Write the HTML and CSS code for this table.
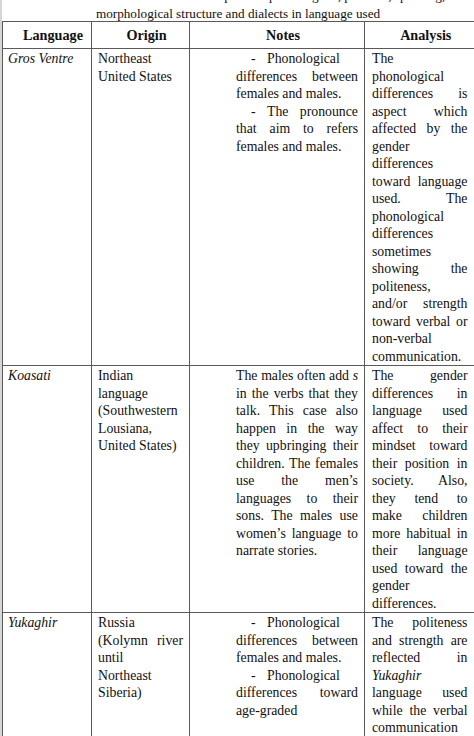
FILE: index.html
```html
<!DOCTYPE html>
<html>
<head>
<meta charset="utf-8">
<link rel="stylesheet" href="styles.css">
</head>
<body>
<div class="page">
  <div class="caption">
    <div class="cap-line cap-first">Table 1. Gender differences in the aspects of phonological, pronoun, speaking,</div>
    <div class="cap-line cap-second">morphological structure and dialects in language used</div>
  </div>
  <table class="grid">
    <colgroup>
      <col class="c-lang">
      <col class="c-origin">
      <col class="c-notes">
      <col class="c-analysis">
    </colgroup>
    <thead>
      <tr>
        <th>Language</th>
        <th>Origin</th>
        <th>Notes</th>
        <th class="last">Analysis</th>
      </tr>
    </thead>
    <tbody>
      <tr>
        <td class="lang"><i>Gros Ventre</i></td>
        <td class="origin">
          <span class="ln">Northeast</span>
          <span class="ln end">United States</span>
        </td>
        <td class="notes">
          <p class="item">
            <span class="ln"><span class="dash">-</span>Phonological</span>
            <span class="ln">differences between</span>
            <span class="ln end">females and males.</span>
          </p>
          <p class="item">
            <span class="ln"><span class="dash">-</span>The pronounce</span>
            <span class="ln">that aim to refers</span>
            <span class="ln end">females and males.</span>
          </p>
        </td>
        <td class="analysis last">
          <span class="ln">The</span>
          <span class="ln">phonological</span>
          <span class="ln">differences is</span>
          <span class="ln">aspect which</span>
          <span class="ln">affected by the</span>
          <span class="ln">gender</span>
          <span class="ln">differences</span>
          <span class="ln">toward language</span>
          <span class="ln">used. The</span>
          <span class="ln">phonological</span>
          <span class="ln">differences</span>
          <span class="ln">sometimes</span>
          <span class="ln">showing the</span>
          <span class="ln">politeness,</span>
          <span class="ln">and/or strength</span>
          <span class="ln">toward verbal or</span>
          <span class="ln">non-verbal</span>
          <span class="ln end">communication.</span>
        </td>
      </tr>
      <tr>
        <td class="lang"><i>Koasati</i></td>
        <td class="origin">
          <span class="ln">Indian</span>
          <span class="ln">language</span>
          <span class="ln">(Southwestern</span>
          <span class="ln">Lousiana,</span>
          <span class="ln end">United States)</span>
        </td>
        <td class="notes">
          <span class="ln">The males often add <i>s</i></span>
          <span class="ln">in the verbs that they</span>
          <span class="ln">talk. This case also</span>
          <span class="ln">happen in the way</span>
          <span class="ln">they upbringing their</span>
          <span class="ln">children. The females</span>
          <span class="ln">use the men’s</span>
          <span class="ln">languages to their</span>
          <span class="ln">sons. The males use</span>
          <span class="ln">women’s language to</span>
          <span class="ln end">narrate stories.</span>
        </td>
        <td class="analysis last">
          <span class="ln">The gender</span>
          <span class="ln">differences in</span>
          <span class="ln">language used</span>
          <span class="ln">affect to their</span>
          <span class="ln">mindset toward</span>
          <span class="ln">their position in</span>
          <span class="ln">society. Also,</span>
          <span class="ln">they tend to</span>
          <span class="ln">make children</span>
          <span class="ln">more habitual in</span>
          <span class="ln">their language</span>
          <span class="ln">used toward the</span>
          <span class="ln">gender</span>
          <span class="ln end">differences.</span>
        </td>
      </tr>
      <tr class="final">
        <td class="lang"><i>Yukaghir</i></td>
        <td class="origin">
          <span class="ln">Russia</span>
          <span class="ln">(Kolymn river</span>
          <span class="ln">until</span>
          <span class="ln">Northeast</span>
          <span class="ln end">Siberia)</span>
        </td>
        <td class="notes">
          <p class="item">
            <span class="ln"><span class="dash">-</span>Phonological</span>
            <span class="ln">differences between</span>
            <span class="ln end">females and males.</span>
          </p>
          <p class="item">
            <span class="ln"><span class="dash">-</span>Phonological</span>
            <span class="ln">differences toward</span>
            <span class="ln end">age-graded</span>
          </p>
        </td>
        <td class="analysis last">
          <span class="ln">The politeness</span>
          <span class="ln">and strength are</span>
          <span class="ln">reflected in</span>
          <span class="ln"><i>Yukaghir</i></span>
          <span class="ln">language used</span>
          <span class="ln">while the verbal</span>
          <span class="ln end">communication</span>
        </td>
      </tr>
    </tbody>
  </table>
</div>
</body>
</html>
```

FILE: styles.css
```css
html, body {
  margin: 0;
  padding: 0;
  background: #ffffff;
}
body {
  font-family: "Liberation Serif", "Times New Roman", serif;
  color: #111111;
  overflow: hidden;
}
.page {
  width: 472px;
  border-left: 2px solid #d6d6d6;
}
.caption {
  font-size: 13.2px;
  line-height: 15px;
  text-align: center;
  white-space: nowrap;
}
.cap-first {
  margin-top: -12px;
}
.cap-second {
  margin-top: 3px;
}
.grid {
  border-collapse: collapse;
  table-layout: fixed;
  width: 472px;
  font-size: 13.8px;
  line-height: 17.5px;
}
.c-lang { width: 89px; }
.c-origin { width: 98px; }
.c-notes { width: 175px; }
.c-analysis { width: 110px; }
th, td {
  border: 1px solid #5a5a5a;
  vertical-align: top;
}
th {
  font-size: 14.2px;
  font-weight: bold;
  text-align: center;
  padding: 4px 0 4px 12px;
  height: 18px;
  line-height: 18px;
}
td {
  padding: 1px 6px 0 6px;
  text-align: left;
}
th.last, td.last {
  border-right: none;
}
td.lang {
  padding-left: 5px;
}
td.notes {
  padding-left: 46px;
}
td.analysis {
  padding-left: 7px;
  padding-right: 7px;
}
.ln {
  display: block;
  white-space: nowrap;
  text-align: justify;
  text-align-last: justify;
}
.ln.end {
  text-align-last: left;
}
.item {
  margin: 0;
}
.item .ln:first-child {
  padding-left: 15px;
}
.dash {
  display: inline-block;
  width: 16px;
}
tr.final td {
  border-bottom: 2px solid #bdbdbd;
}
```
